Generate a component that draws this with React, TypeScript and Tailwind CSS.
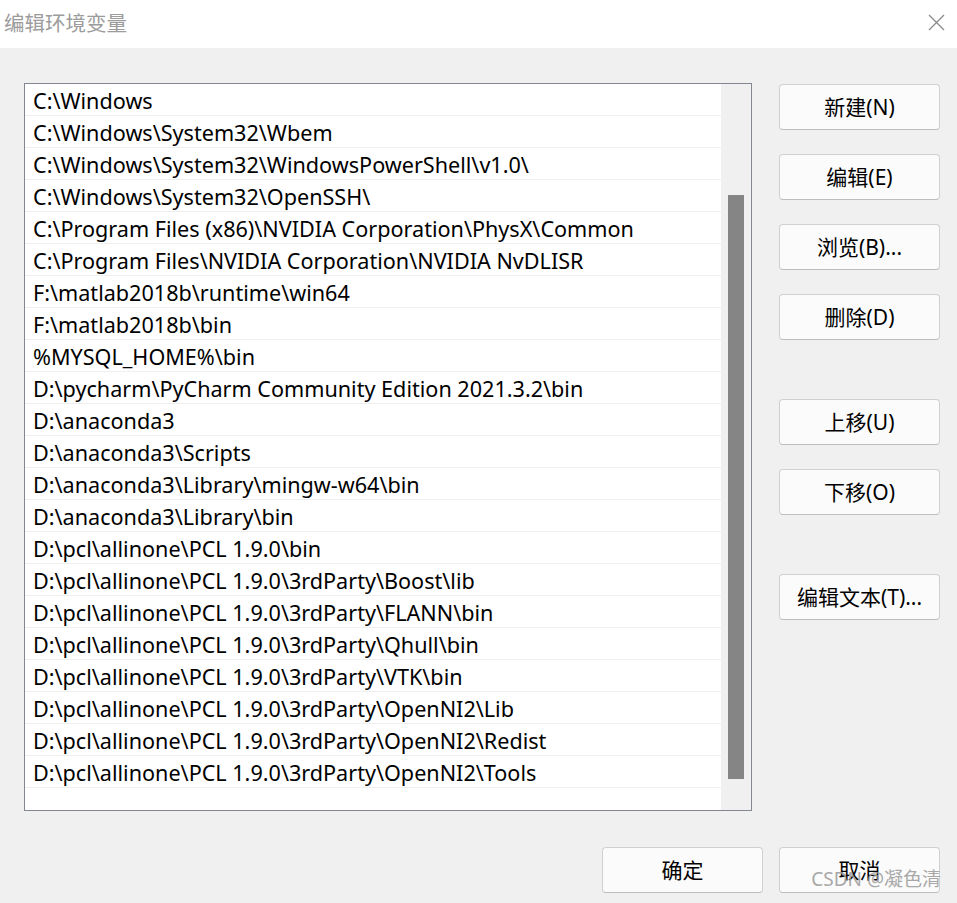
import React from "react";

const paths = [
  "C:\\Windows",
  "C:\\Windows\\System32\\Wbem",
  "C:\\Windows\\System32\\WindowsPowerShell\\v1.0\\",
  "C:\\Windows\\System32\\OpenSSH\\",
  "C:\\Program Files (x86)\\NVIDIA Corporation\\PhysX\\Common",
  "C:\\Program Files\\NVIDIA Corporation\\NVIDIA NvDLISR",
  "F:\\matlab2018b\\runtime\\win64",
  "F:\\matlab2018b\\bin",
  "%MYSQL_HOME%\\bin",
  "D:\\pycharm\\PyCharm Community Edition 2021.3.2\\bin",
  "D:\\anaconda3",
  "D:\\anaconda3\\Scripts",
  "D:\\anaconda3\\Library\\mingw-w64\\bin",
  "D:\\anaconda3\\Library\\bin",
  "D:\\pcl\\allinone\\PCL 1.9.0\\bin",
  "D:\\pcl\\allinone\\PCL 1.9.0\\3rdParty\\Boost\\lib",
  "D:\\pcl\\allinone\\PCL 1.9.0\\3rdParty\\FLANN\\bin",
  "D:\\pcl\\allinone\\PCL 1.9.0\\3rdParty\\Qhull\\bin",
  "D:\\pcl\\allinone\\PCL 1.9.0\\3rdParty\\VTK\\bin",
  "D:\\pcl\\allinone\\PCL 1.9.0\\3rdParty\\OpenNI2\\Lib",
  "D:\\pcl\\allinone\\PCL 1.9.0\\3rdParty\\OpenNI2\\Redist",
  "D:\\pcl\\allinone\\PCL 1.9.0\\3rdParty\\OpenNI2\\Tools",
];

function Btn({ label, className = "" }: { label: string; className?: string }) {
  return (
    <div
      className={
        "flex h-[46px] w-[161px] items-center justify-center rounded-[4px] border border-[#d0d0d0] border-b-[#bdbdbd] bg-[#fbfbfb] pt-[2px] text-[21px] text-black " +
        className
      }
    >
      {label}
    </div>
  );
}

export default function App() {
  return (
    <div
      className="relative h-[903px] w-[957px] overflow-hidden bg-[#f0f0f0]"
      style={{ fontFamily: '"Noto Sans", "Noto Sans CJK SC", sans-serif' }}
    >
      {/* title bar */}
      <div className="flex h-[48px] items-center justify-between bg-white pl-[4px] pr-[12px]">
        <div className="pb-[4px] text-[20.5px] text-[#9c9c9c]" style={{ fontFamily: '"Noto Sans CJK SC", sans-serif' }}>
          编辑环境变量
        </div>
        <svg width="17" height="17" viewBox="0 0 17 17" className="mb-[4px]">
          <path d="M1 1 L16 16 M16 1 L1 16" stroke="#8a8a8a" strokeWidth="1.3" fill="none" />
        </svg>
      </div>

      <div className="flex pl-[24px] pt-[35px]">
        {/* list */}
        <div className="flex h-[728px] w-[728px] border border-[#828790] bg-white">
          <div className="flex w-[696px] flex-col">
            {paths.map((p) => (
              <div
                key={p}
                className="flex h-[32px] shrink-0 items-center border-b border-[#efefef] pl-[8px] pt-[2px] text-[21.6px] leading-none text-black"
              >
                <span className="whitespace-pre">{p}</span>
              </div>
            ))}
          </div>
          <div className="flex w-[30px] flex-col bg-[#f0f0f0] pl-[7px] pt-[111px]">
            <div className="h-[584px] w-[16px] bg-[#858585]" />
          </div>
        </div>

        {/* right buttons */}
        <div className="ml-[27px] flex flex-col pt-[1px]">
          <Btn label="新建(N)" />
          <Btn label="编辑(E)" className="mt-[24px]" />
          <Btn label="浏览(B)..." className="mt-[24px]" />
          <Btn label="删除(D)" className="mt-[24px]" />
          <Btn label="上移(U)" className="mt-[59px]" />
          <Btn label="下移(O)" className="mt-[24px]" />
          <Btn label="编辑文本(T)..." className="mt-[59px]" />
        </div>
      </div>

      {/* bottom buttons */}
      <div className="flex justify-end gap-[16px] pr-[17px] pt-[36px]">
        <Btn label="确定" />
        <Btn label="取消" />
      </div>

      {/* watermark */}
      <div
        className="absolute right-[16px] top-[870px] text-[19px] leading-none text-[#a0a0a0] opacity-90"
        style={{ fontFamily: '"Noto Sans", "Noto Sans CJK SC", sans-serif' }}
      >
        CSDN @凝色清
      </div>
    </div>
  );
}
